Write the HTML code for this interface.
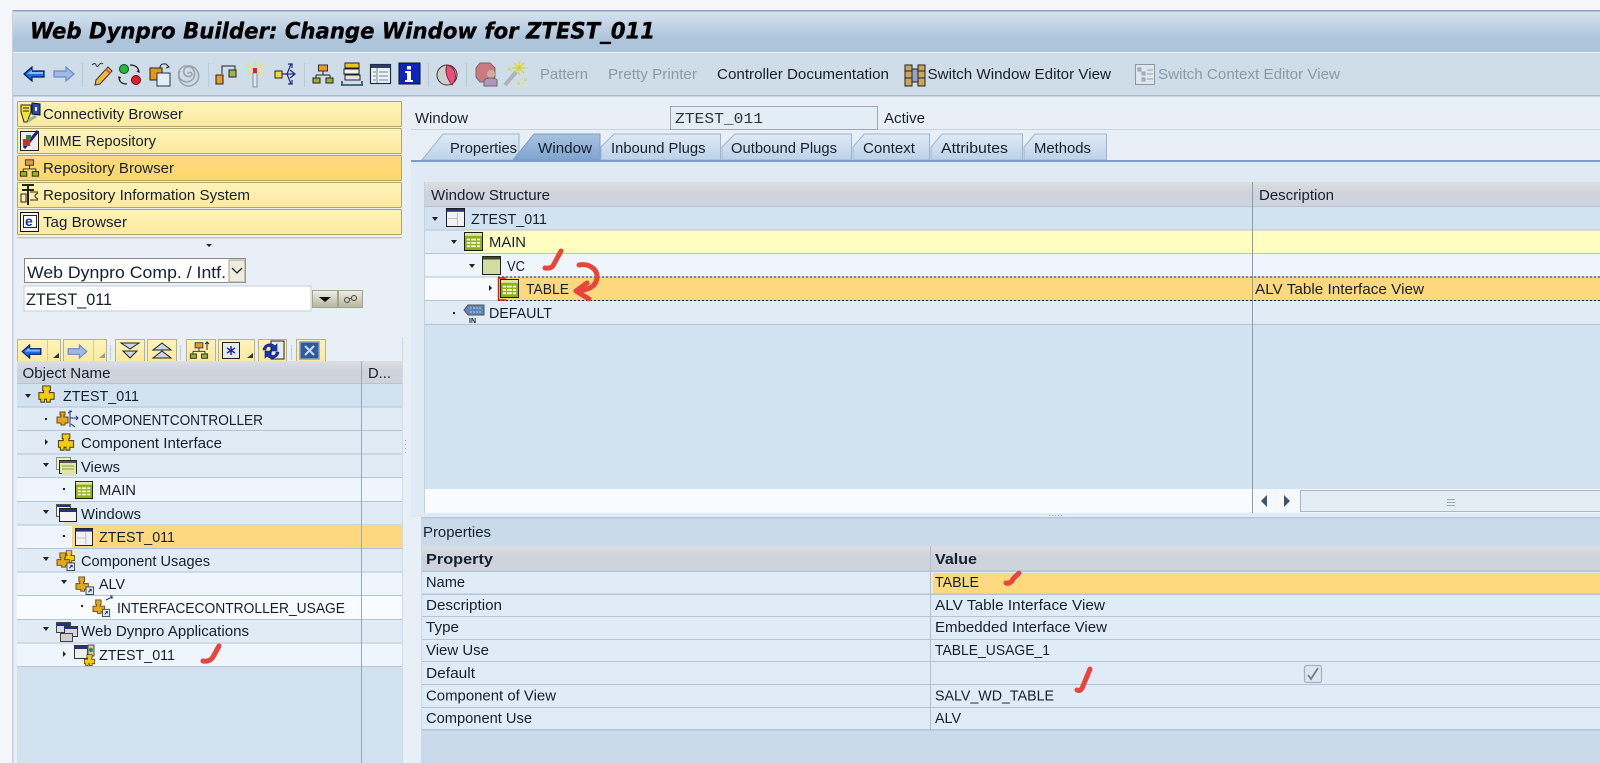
<!DOCTYPE html>
<html><head><meta charset="utf-8"><title>Web Dynpro Builder</title>
<style>
html,body{margin:0;padding:0;width:1600px;height:763px;overflow:hidden;background:#f4f6fa}
svg{display:block;filter:blur(.3px)}
text{font-family:"Liberation Sans",sans-serif;font-size:15px;fill:#16202c}
.g{fill:#8d99a4}
.t{font-family:"DejaVu Sans",sans-serif;font-size:22px;font-weight:bold;font-style:italic;fill:#000;stroke:#000;stroke-width:.35px}
.m{font-family:"Liberation Mono",monospace;font-size:15px;fill:#333}
.b{font-weight:bold}
.big{font-size:17px}
</style></head><body>
<svg xmlns="http://www.w3.org/2000/svg" width="1600" height="763" viewBox="0 0 1600 763">
<defs>
<linearGradient id="tg" x1="0" y1="0" x2="0" y2="1"><stop offset="0" stop-color="#d7e4f0"/><stop offset=".7" stop-color="#adc4da"/><stop offset="1" stop-color="#adc4da"/></linearGradient>
<linearGradient id="btn" x1="0" y1="0" x2="0" y2="1"><stop offset="0" stop-color="#fdf3b8"/><stop offset="1" stop-color="#fde9a0"/></linearGradient>
<linearGradient id="btna" x1="0" y1="0" x2="0" y2="1"><stop offset="0" stop-color="#fed983"/><stop offset="1" stop-color="#fed768"/></linearGradient>
<linearGradient id="hd" x1="0" y1="0" x2="0" y2="1"><stop offset="0" stop-color="#dcdfe2"/><stop offset=".4" stop-color="#cfd4dc"/><stop offset="1" stop-color="#ced3dc"/></linearGradient>
<linearGradient id="act" x1="0" y1="0" x2="0" y2="1"><stop offset="0" stop-color="#a8c3e0"/><stop offset="1" stop-color="#7fa3cf"/></linearGradient>
<linearGradient id="ina" x1="0" y1="0" x2="0" y2="1"><stop offset="0" stop-color="#dfeaf5"/><stop offset="1" stop-color="#bcd2e8"/></linearGradient>
<linearGradient id="dk" x1="0" y1="0" x2="0" y2="1"><stop offset="0" stop-color="#f0efe4"/><stop offset="1" stop-color="#b5b59c"/></linearGradient>
<symbol id="al" viewBox="0 0 22 16"><path d="M1 8L9 1V5H21V11H9V15Z" fill="#1f6be0" stroke="#06166a" stroke-width="1.2"/><path d="M4 8L9 4V6H20V8Z" fill="#7fc0ff"/></symbol>
<symbol id="ar" viewBox="0 0 22 16"><path d="M21 8L13 1V5H1V11H13V15Z" fill="#9db9e6" stroke="#6e8ac4" stroke-width="1.2"/></symbol>
<symbol id="hier" viewBox="0 0 22 22"><path d="M11 8V12M4 12H18M4 12V15M18 12V15" stroke="#222" fill="none"/><rect x="6.5" y="2" width="9" height="6" fill="#e69a28" stroke="#333"/><rect x="1" y="15" width="7" height="5" fill="#9aae3c" stroke="#222"/><rect x="14" y="15" width="7" height="5" fill="#9aae3c" stroke="#222"/></symbol>
<symbol id="win" viewBox="0 0 20 20"><rect x=".5" y=".5" width="19" height="19" fill="#f2f2f2" stroke="#111"/><rect x="1" y="1" width="18" height="3" fill="#26327e"/><path d="M2 11H12M12 5V18" stroke="#bbb"/></symbol>
<symbol id="view" viewBox="0 0 20 20"><rect x=".5" y=".5" width="19" height="19" fill="#8fb01c" stroke="#111"/><rect x="1" y="1" width="18" height="3" fill="#dfe89c"/><path d="M3 8H17M3 11.5H17M3 15H17" stroke="#f2f6c8" stroke-width="2"/><path d="M7 6V17M13 6V17" stroke="#8fb01c"/></symbol>
<symbol id="pz" viewBox="0 0 20 20"><path d="M2 8H7V6H6V1H14V6H13V8H18V15H14V18H10V15H8V18H4V15H2Z" fill="#f4cb10" stroke="#3d3205"/></symbol>
<symbol id="pzo" viewBox="0 0 22 20"><path d="M1 8H5V6H4V1H10V6H9V8H14V14H10V16H6V14H1Z" fill="#e3a722" stroke="#6a4a0c"/><rect x="11.500" y="11.500" width="8" height="8" fill="#dce7ef" stroke="#2c4a62"/><path d="M14 17L17 14M15 14H17V16" stroke="#1a2c4c" fill="none"/></symbol>
</defs>

<rect width="1600" height="763" fill="#e8eff7"/>
<rect width="1600" height="10" fill="#f4f6fa"/>
<rect width="12" height="763" fill="#f4f6fa"/>
<rect x="12" y="10" width="1.5" height="753" fill="#c4d0de"/>
<rect x="13" y="10" width="1587" height="42" fill="url(#tg)"/>
<rect x="13" y="10" width="1587" height="1.5" fill="#8aa4c2"/>
<rect x="13" y="52" width="1587" height="1" fill="#eaf0f6"/>
<rect x="13" y="53" width="1587" height="43" fill="#cfdde8"/>
<rect x="13" y="95" width="1587" height="1.5" fill="#a7b9ca"/>
<text class="t" x="30" y="38.500" textLength="625" lengthAdjust="spacingAndGlyphs">Web Dynpro Builder: Change Window for ZTEST_011</text>

<!-- Toolbar icons -->
<use href="#al" x="23" y="66" width="22" height="16"/>
<use href="#ar" x="53" y="66" width="22" height="16"/>
<g fill="#b9c9d6"><rect x="82" y="63" width="1" height="24"/><rect x="208" y="63" width="1" height="24"/><rect x="304" y="63" width="1" height="24"/><rect x="428" y="63" width="1" height="24"/><rect x="466" y="63" width="1" height="24"/></g>
<!-- pencil -->
<path d="M92 65q3-3 4 0t3 0 4-1" fill="none" stroke="#333"/>
<path d="M108 67L112 71L100 84L95 85L96 80Z" fill="#f5b83a" stroke="#333"/><path d="M106 69L110 73" stroke="#e0584a" stroke-width="2"/>
<!-- traffic -->
<circle cx="124" cy="69" r="4.5" fill="#22b845" stroke="#0c4a18"/><circle cx="136" cy="80" r="4.5" fill="#e0202e" stroke="#5a0c14"/>
<path d="M130 65q8 0 9 7l-2-1M127 84q-8 0-8-7l2 1" fill="none" stroke="#222" stroke-width="1.3"/>
<!-- activate copy -->
<rect x="150" y="68" width="12" height="12" fill="#e8951c" stroke="#222"/><rect x="157" y="73" width="13" height="13" fill="#e4eef6" stroke="#24304c"/><path d="M160 68q0-5 6-4l3 3-3 1" fill="none" stroke="#222"/>
<!-- spiral -->
<path d="M188 74a2 2 0 1 1 3 2a5 5 0 1 1 2-7a8 8 0 1 1-5-3a10 10 0 1 1-8 5" fill="none" stroke="#9aa4ac" stroke-width="1.6"/>
<!-- where-used -->
<path d="M222 74V66H235V70" fill="none" stroke="#222"/><rect x="216" y="75" width="7" height="9" fill="#e69a28" stroke="#222"/><rect x="229" y="70" width="7" height="7" fill="#a6b446" stroke="#222"/>
<!-- flash -->
<rect x="253" y="73" width="4" height="14" fill="#dfe7ee" stroke="#87939e"/><rect x="253" y="68" width="4" height="5" fill="#e0202e"/><path d="M247 64L252 69M263 64L258 69M247 75L251 72M264 75L259 72M255 61V66" stroke="#f2e53a" stroke-width="1.5"/>
<!-- move -->
<rect x="275" y="71" width="7" height="7" fill="#f4dc28" stroke="#222"/><path d="M282 74H295M290 70L295 74L290 78M287 74L291 64M287 74L291 84M288 64H292V68M288 84H292V80" fill="none" stroke="#1d2c84" stroke-width="1.2"/>
<use href="#hier" x="312" y="63" width="22" height="22"/>
<!-- stack -->
<rect x="345" y="63" width="14" height="5" fill="#e8c81c" stroke="#222"/><rect x="344" y="69" width="15" height="5" fill="#f2f2f2" stroke="#222"/><rect x="345" y="75" width="15" height="5" fill="#e4e4e4" stroke="#222"/><path d="M341 85H363M342 81V85M362 81V85" stroke="#1a4a62" stroke-width="1.5"/>
<!-- list -->
<rect x="370.500" y="64.500" width="20" height="19" fill="#eef3f7" stroke="#1c3048" stroke-width="1.2"/><rect x="371" y="65" width="19" height="3" fill="#2c3c70"/><path d="M377 68V83M373 72H376M373 76H376M373 80H376M379 72H388M379 76H388M379 80H388" stroke="#708498"/>
<!-- info -->
<rect x="399" y="63" width="21" height="21" fill="#0c24c0" stroke="#111"/><rect x="407" y="66" width="4" height="3.500" fill="#fff"/><path d="M405 71H411V80H413V82H405V80H407V73H405Z" fill="#fff"/>
<!-- sphere -->
<circle cx="447" cy="75" r="10" fill="#cfcfcf" stroke="#333"/><path d="M447 65C456 67 458 78 452 85C448 80 444 72 447 65Z" fill="#e8507c" stroke="#8a2436"/>
<!-- stop user -->
<path d="M480 63H490L495 68V77L490 82H480L476 77V68Z" fill="#cc7a82" stroke="#766"/><circle cx="491" cy="74" r="4" fill="#d2aca0"/><path d="M484 86V82Q484 78 491 78T497 82V86Z" fill="#b298b8" stroke="#667"/>
<!-- wand -->
<path d="M505 85L517 71" stroke="#a9b3b8" stroke-width="4"/><circle cx="519" cy="68" r="5" fill="#eee67a"/><path d="M519 61V75M512 68H526M514 63L524 73M524 63L514 73" stroke="#c8c860"/><g fill="#d8d878"><rect x="524" y="78" width="3" height="3"/><rect x="517" y="82" width="3" height="3"/><rect x="508" y="68" width="3" height="3"/></g>

<text class="g" x="540" y="79" textLength="48" lengthAdjust="spacingAndGlyphs">Pattern</text>
<text class="g" x="608" y="79" textLength="89" lengthAdjust="spacingAndGlyphs">Pretty Printer</text>
<text x="717" y="79" textLength="172" lengthAdjust="spacingAndGlyphs">Controller Documentation</text>
<!-- film icon -->
<rect x="905" y="65" width="7" height="21" fill="#c9a85c" stroke="#222"/><rect x="918" y="65" width="7" height="21" fill="#c9a85c" stroke="#222"/><rect x="912" y="69" width="6" height="13" fill="#8ba4c8" stroke="#223"/><path d="M905 71H912M905 78H912M918 71H925M918 78H925" stroke="#222"/>
<text x="927.500" y="79" textLength="183.500" lengthAdjust="spacingAndGlyphs">Switch Window Editor View</text>
<rect x="1135.500" y="64.500" width="19" height="20" fill="#dfe6ec" stroke="#8b99a6"/><path d="M1138 68h3v3h-3zM1142 78h3v3h-3zM1142 72h3v3h-3zM1147 70h6M1147 74h6M1147 79h6" fill="#aab6c0" stroke="#9aa6b2"/>
<text class="g" x="1158" y="79" textLength="182" lengthAdjust="spacingAndGlyphs">Switch Context Editor View</text>

<!-- Left browser buttons -->
<g stroke="#b0a56c">
<rect x="17.500" y="101.500" width="384" height="25" rx="1" fill="url(#btn)"/>
<rect x="17.500" y="128.500" width="384" height="25" rx="1" fill="url(#btn)"/>
<rect x="17.500" y="155.500" width="384" height="25" rx="1" fill="url(#btna)"/>
<rect x="17.500" y="182.500" width="384" height="25" rx="1" fill="url(#btn)"/>
<rect x="17.500" y="209.500" width="384" height="25" rx="1" fill="url(#btn)"/>
</g>
<rect x="17" y="237" width="385" height="1.500" fill="#c8c8b0"/>
<!-- button icons -->
<path d="M21 105H31V112L27 122H24L21 112Z" fill="#f2e23c" stroke="#222"/><path d="M23 108H29M23 111H29" stroke="#222"/><path d="M32 103L40 104V115L32 114Z" fill="#2848c8" stroke="#111"/><rect x="35" y="107" width="2" height="4" fill="#fff"/><path d="M28 121L36 116" stroke="#9aa" stroke-width="3"/>
<rect x="20.500" y="131.500" width="18" height="19" fill="#eee" stroke="#222"/><path d="M24 148L38 131" stroke="#20208c" stroke-width="3"/><rect x="23" y="139" width="7" height="7" fill="#c8302c"/><rect x="26" y="135" width="5" height="5" fill="#2c8a34"/>
<use href="#hier" x="19" y="158" width="21" height="20"/>
<path d="M22 185H34M28 185V205M22 190H34" stroke="#222" stroke-width="2" fill="none"/><path d="M21 194H26V202H21ZM30 192H38M30 200H38" stroke="#222" fill="none"/><path d="M38 193Q32 196 38 199" stroke="#222" fill="none"/>
<rect x="20.500" y="212.500" width="18" height="19" fill="#f4f4f4" stroke="#111"/><rect x="23.500" y="215.500" width="13" height="12" fill="#fff" stroke="#223"/><text x="25" y="226" style="font-size:14px;font-weight:bold;fill:#1030a8">e</text>
<text x="43" y="119" textLength="140" lengthAdjust="spacingAndGlyphs">Connectivity Browser</text>
<text x="43" y="146" textLength="113" lengthAdjust="spacingAndGlyphs">MIME Repository</text>
<text x="43" y="173" textLength="131" lengthAdjust="spacingAndGlyphs">Repository Browser</text>
<text x="43" y="200" textLength="207" lengthAdjust="spacingAndGlyphs">Repository Information System</text>
<text x="43" y="227" textLength="84" lengthAdjust="spacingAndGlyphs">Tag Browser</text>
<path d="M206 244H212L209 247Z" fill="#222"/>

<!-- Dropdown + input -->
<rect x="24.500" y="258.500" width="221" height="24" fill="#fff" stroke="#8a8a80"/>
<rect x="229" y="260" width="16" height="22" fill="#ececdf" stroke="#a0a090"/><path d="M232 268L237 273L242 268" fill="none" stroke="#222" stroke-width="1.300"/>
<text class="big" x="27" y="278" textLength="199" lengthAdjust="spacingAndGlyphs">Web Dynpro Comp. / Intf.</text>
<rect x="24" y="286" width="287" height="25" fill="#fff" stroke="#c4ccd4"/>
<text class="big" x="26" y="305" textLength="86" lengthAdjust="spacingAndGlyphs">ZTEST_011</text>
<rect x="312.500" y="290.500" width="25" height="17" fill="url(#dk)" stroke="#a3a38e"/><path d="M319 297H331L325 302Z" fill="#111"/>
<rect x="338.500" y="290.500" width="24" height="17" fill="url(#dk)" stroke="#a3a38e"/><circle cx="347" cy="300" r="2.500" fill="none" stroke="#444"/><circle cx="354" cy="298" r="2.500" fill="none" stroke="#444"/><path d="M349 299L352 298" stroke="#444"/>

<!-- mini toolbar -->
<g fill="url(#btn)" stroke="#bdb27e">
<rect x="17.500" y="339.500" width="43" height="22"/><rect x="63.500" y="339.500" width="43" height="22"/>
<rect x="115.500" y="339.500" width="29" height="22"/><rect x="147.500" y="339.500" width="29" height="22"/>
<rect x="186.500" y="339.500" width="29" height="22"/><rect x="218.500" y="339.500" width="36" height="22"/>
<rect x="258.500" y="339.500" width="28" height="22"/><rect x="296.500" y="339.500" width="29" height="22"/>
</g>
<g fill="#c2ccd6"><rect x="110" y="345" width="1" height="15"/><rect x="180" y="345" width="1" height="15"/><rect x="291" y="345" width="1" height="15"/></g>
<rect x="47" y="340" width="1" height="21" fill="#d8cc90"/><rect x="93" y="340" width="1" height="21" fill="#d8cc90"/>
<use href="#al" x="21" y="344" width="21" height="15"/><use href="#ar" x="67" y="344" width="21" height="15"/>
<path d="M53 358H59V353Z" fill="#333"/><path d="M99 358H105V353Z" fill="#999"/>
<path d="M121 343H139L130 349ZM123 351H137L130 358Z" fill="#c7d5e6" stroke="#222"/>
<path d="M153 350L162 343L171 350ZM153 358L162 351L171 358Z" fill="#c7d5e6" stroke="#222"/>
<use href="#hier" x="189" y="341" width="20" height="19"/><path d="M207 350V342M205 344L207 342L209 344" stroke="#222" fill="none"/>
<rect x="222.500" y="342.500" width="17" height="16" fill="#e4e9f0" stroke="#222"/><path d="M231 346V355M227 348L235 353M235 348L227 353" stroke="#20308c" stroke-width="1.500"/>
<path d="M247 358H253V353Z" fill="#333"/>
<rect x="271" y="341" width="13" height="18" fill="#e8ecf0" stroke="#222"/><path d="M263 350a7 7 0 0 1 12-4l2-2v7h-7l2-2a3 3 0 0 0-6 1ZM279 352a7 7 0 0 1-12 4l-2 2v-7h7l-2 2a3 3 0 0 0 6-1Z" fill="#1838b8" stroke="#0a1660" stroke-width=".6"/>
<rect x="300" y="342" width="19" height="17" fill="#2c5c9c" stroke="#889cc4" stroke-width="1.500"/><path d="M305 346L314 355M314 346L305 355" stroke="#cdd8ec" stroke-width="2"/>

<!-- left table -->
<rect x="17" y="361" width="385" height="402" fill="#d3e2f0"/>
<rect x="17" y="361" width="385" height="22" fill="url(#hd)"/>
<g fill="#e1ebf6"><rect x="17" y="407" width="385" height="70"/></g>
<g fill="#eff5fc"><rect x="17" y="478" width="385" height="23"/><rect x="17" y="525" width="385" height="23"/></g>
<rect x="17" y="501" width="385" height="24" fill="#e1ebf6"/>
<rect x="17" y="548" width="385" height="24" fill="#e1ebf6"/>
<rect x="17" y="572" width="385" height="23.500" fill="#eff5fc"/>
<rect x="17" y="595" width="385" height="24" fill="#f8fbff"/>
<rect x="17" y="619" width="385" height="23" fill="#e1ebf6"/>
<rect x="17" y="642" width="385" height="24" fill="#eff5fc"/>
<rect x="72" y="526" width="330" height="22" fill="#fdd87f"/>
<g fill="#b4c4d4">
<rect x="17" y="383" width="385" height="1"/><rect x="17" y="406.500" width="385" height="1"/><rect x="17" y="430" width="385" height="1"/><rect x="17" y="453.500" width="385" height="1"/><rect x="17" y="477" width="385" height="1"/><rect x="17" y="501" width="385" height="1"/><rect x="17" y="524.500" width="385" height="1"/><rect x="17" y="548" width="385" height="1"/><rect x="17" y="571.500" width="385" height="1"/><rect x="17" y="595" width="385" height="1"/><rect x="17" y="619" width="385" height="1"/><rect x="17" y="642.500" width="385" height="1"/><rect x="17" y="666" width="385" height="1"/>
</g>
<rect x="361" y="361" width="1" height="402" fill="#98a8b8"/>
<rect x="402" y="337" width="1" height="426" fill="#d0dae6"/>
<text x="22.500" y="378" textLength="88" lengthAdjust="spacingAndGlyphs">Object Name</text>
<text x="368" y="378" textLength="23" lengthAdjust="spacingAndGlyphs">D...</text>

<!-- left tree glyphs -->
<g fill="#222">
<path d="M25 394H31L28 398Z"/>
<rect x="45" y="418" width="2" height="2"/>
<path d="M45 439V445L48 442Z"/>
<path d="M43 463H49L46 467Z"/>
<rect x="63" y="488" width="2" height="2"/>
<path d="M43 510H49L46 514Z"/>
<rect x="63" y="535" width="2" height="2"/>
<path d="M43 557H49L46 561Z"/>
<path d="M61 580H67L64 584Z"/>
<rect x="81" y="605" width="2" height="2"/>
<path d="M43 627H49L46 631Z"/>
<path d="M63 651V657L66 654Z"/>
</g>
<!-- left tree icons -->
<use href="#pz" x="37" y="385" width="19" height="19"/>
<g transform="translate(56,410)"><path d="M1 7H5V5H4V2H9V5H8V7H12V13H9V15H5V13H1Z" fill="#e3a722" stroke="#6a4a0c"/><path d="M14 0V17M12 3L16 1M14 8H22M20 6L22 8L20 10M15 14L19 17" stroke="#20308c" fill="none"/></g>
<use href="#pz" x="56" y="433" width="20" height="19"/>
<!-- views -->
<rect x="56.500" y="457.500" width="14" height="12" fill="#eef2c8" stroke="#88967c"/><rect x="59.500" y="460.500" width="17" height="13" fill="#dde8a0" stroke="#2a2a1c"/><rect x="60" y="461" width="16" height="2" fill="#556"/><path d="M62 466H74M62 469H74" stroke="#889c50"/><rect x="62" y="473" width="14" height="3" fill="#d8e0c0"/>
<use href="#view" x="75" y="481" width="18" height="18"/>
<!-- windows -->
<rect x="56.500" y="504.500" width="14" height="12" fill="#f4f4f4" stroke="#555"/><rect x="57" y="505" width="13" height="2" fill="#28327c"/><rect x="59.500" y="508.500" width="17" height="13" fill="#f4f4f4" stroke="#222"/><rect x="60" y="509" width="16" height="3" fill="#28327c"/><rect x="64" y="522" width="12" height="3" fill="#e0dcc8"/>
<use href="#win" x="75" y="528" width="18" height="18"/>
<!-- usages -->
<use href="#pz" x="62" y="550" width="14" height="14"/>
<use href="#pzo" x="56" y="552" width="21" height="19"/>
<use href="#pzo" x="75" y="576" width="21" height="19"/>
<use href="#pzo" x="92" y="599" width="20" height="18"/>
<path d="M106 600L112 597M110 596H112V599" stroke="#20308c" fill="none"/>
<!-- apps -->
<rect x="56.500" y="622.500" width="14" height="10" fill="#d8dde4" stroke="#444"/><rect x="57" y="623" width="13" height="3" fill="#28327c"/><rect x="64.500" y="626.500" width="13" height="10" fill="#d4d8de" stroke="#333"/><rect x="65" y="627" width="12" height="2" fill="#28327c"/><rect x="60.500" y="633.500" width="12" height="8" fill="#d0d0d0" stroke="#444"/>
<rect x="74.500" y="645.500" width="13" height="13" fill="#eee" stroke="#333"/><rect x="75" y="646" width="12" height="3" fill="#28327c"/><path d="M88 645H94V656H88Z" fill="#d4cc90" stroke="#555"/><circle cx="91" cy="650" r="2" fill="#2c8a44"/><use href="#pz" x="83" y="654" width="13" height="13"/>
<!-- left tree text -->
<text x="63" y="401" textLength="76" lengthAdjust="spacingAndGlyphs">ZTEST_011</text>
<text x="81" y="425" textLength="182" lengthAdjust="spacingAndGlyphs">COMPONENTCONTROLLER</text>
<text x="81" y="448" textLength="141" lengthAdjust="spacingAndGlyphs">Component Interface</text>
<text x="81" y="472" textLength="39" lengthAdjust="spacingAndGlyphs">Views</text>
<text x="99" y="495" textLength="37" lengthAdjust="spacingAndGlyphs">MAIN</text>
<text x="81" y="519" textLength="60" lengthAdjust="spacingAndGlyphs">Windows</text>
<text x="99" y="542" textLength="76" lengthAdjust="spacingAndGlyphs">ZTEST_011</text>
<text x="81" y="566" textLength="129" lengthAdjust="spacingAndGlyphs">Component Usages</text>
<text x="99" y="589" textLength="26" lengthAdjust="spacingAndGlyphs">ALV</text>
<text x="117" y="613" textLength="228" lengthAdjust="spacingAndGlyphs">INTERFACECONTROLLER_USAGE</text>
<text x="81" y="636" textLength="168" lengthAdjust="spacingAndGlyphs">Web Dynpro Applications</text>
<text x="99" y="660" textLength="76" lengthAdjust="spacingAndGlyphs">ZTEST_011</text>
<g fill="#a8b4c0"><rect x="405" y="440" width="1" height="1"/><rect x="405" y="444" width="1" height="1"/><rect x="405" y="448" width="1" height="1"/><rect x="405" y="452" width="1" height="1"/></g>

<!-- Right: window header -->
<text x="415" y="123" textLength="53" lengthAdjust="spacingAndGlyphs">Window</text>
<rect x="411" y="129" width="1189" height="1" fill="#c8d4e0"/>
<rect x="670.500" y="106.500" width="207" height="23" fill="#e2edf5" stroke="#a0a8b0"/>
<text class="m" x="675" y="123" textLength="88" lengthAdjust="spacingAndGlyphs">ZTEST_011</text>
<text x="884" y="123" textLength="41" lengthAdjust="spacingAndGlyphs">Active</text>

<!-- panel and tabs -->
<rect x="411" y="160" width="1189" height="357" fill="#dfeaf5"/>
<g stroke="#9db4cc">
<path d="M422 160L443 134H519V160Z" fill="url(#ina)"/>
<path d="M601 160V147L614 134H720.500V160Z" fill="url(#ina)"/>
<path d="M722 160V147L735 134H851.500V160Z" fill="url(#ina)"/>
<path d="M853 160V147L864 134H929.500V160Z" fill="url(#ina)"/>
<path d="M931 160V147L942 134H1022.500V160Z" fill="url(#ina)"/>
<path d="M1024 160V147L1035 134H1106.500V160Z" fill="url(#ina)"/>
</g>
<path d="M513 160L534 134H600V160Z" fill="url(#act)" stroke="#7f9dc2"/>
<rect x="411" y="160" width="1189" height="2" fill="#7c9cc6"/>
<text x="450" y="153" textLength="67" lengthAdjust="spacingAndGlyphs">Properties</text>
<text x="538" y="153" textLength="54" lengthAdjust="spacingAndGlyphs">Window</text>
<text x="611" y="153" textLength="94.500" lengthAdjust="spacingAndGlyphs">Inbound Plugs</text>
<text x="731" y="153" textLength="106" lengthAdjust="spacingAndGlyphs">Outbound Plugs</text>
<text x="863" y="153" textLength="52" lengthAdjust="spacingAndGlyphs">Context</text>
<text x="941" y="153" textLength="67" lengthAdjust="spacingAndGlyphs">Attributes</text>
<text x="1034" y="153" textLength="57" lengthAdjust="spacingAndGlyphs">Methods</text>

<!-- right tree -->
<rect x="424" y="182" width="1176" height="331" fill="#d3e2f0"/>
<rect x="424" y="182" width="1176" height="24" fill="url(#hd)"/>
<rect x="424" y="230" width="1176" height="23" fill="#e1ebf6"/>
<rect x="464" y="230" width="1136" height="23" fill="#fffdc0"/>
<rect x="424" y="253" width="1176" height="24" fill="#eff5fc"/>
<rect x="424" y="277" width="1176" height="23.500" fill="#f9fbff"/>
<rect x="498" y="277" width="1102" height="23.500" fill="#fdd87f"/>
<rect x="424" y="300.500" width="1176" height="23.500" fill="#e1ebf6"/>
<rect x="424" y="489" width="828" height="24" fill="#f8fbff"/>
<rect x="1253" y="489" width="347" height="24" fill="#f2f6fa"/>
<g fill="#b4c4d4"><rect x="424" y="206" width="1176" height="1"/><rect x="424" y="229.500" width="1176" height="1"/><rect x="424" y="253" width="1176" height="1"/><rect x="424" y="276.500" width="1176" height="1"/><rect x="424" y="300" width="1176" height="1"/><rect x="424" y="324" width="1176" height="1"/></g>
<path d="M498 277H1600M498 300.500H1600" stroke="#222" stroke-dasharray="2 2" fill="none"/>
<path d="M506 278H498.500V300H506" fill="none" stroke="#e01818" stroke-width="1.500"/>
<rect x="1252" y="182" width="1" height="331" fill="#8c9cac"/>
<rect x="424" y="182" width="1" height="331" fill="#c4d0de"/>
<!-- scrollbar -->
<rect x="1253" y="490" width="22" height="22" fill="#f6f9fc"/><rect x="1276" y="490" width="22" height="22" fill="#f6f9fc"/>
<path d="M1267 495V507L1261 501Z" fill="#3c566e"/><path d="M1284 495V507L1290 501Z" fill="#3c566e"/>
<rect x="1300.500" y="490.500" width="300" height="21" fill="#e4ecf4" stroke="#a8b8c8"/>
<g fill="#9aa8b6"><rect x="1447" y="499" width="8" height="1"/><rect x="1447" y="502" width="8" height="1"/><rect x="1447" y="505" width="8" height="1"/></g>
<text x="431" y="200" textLength="119" lengthAdjust="spacingAndGlyphs">Window Structure</text>
<text x="1259" y="200" textLength="75" lengthAdjust="spacingAndGlyphs">Description</text>
<g fill="#222"><path d="M432 217H438L435 221Z"/><path d="M451 240H457L454 244Z"/><path d="M469 264H475L472 268Z"/><path d="M489 285V291L492 288Z"/><rect x="453" y="312" width="2" height="2"/></g>
<use href="#win" x="446" y="208" width="19" height="19"/>
<use href="#view" x="464" y="232" width="19" height="19"/>
<rect x="482.500" y="256.500" width="18" height="18" fill="#d2dca4" stroke="#222"/><rect x="483" y="257" width="17" height="2.500" fill="#3e4a28"/>
<use href="#view" x="500" y="279" width="19" height="19"/>
<path d="M468 305H484V315H468L464 310Z" fill="#5e86b4" stroke="#555"/><path d="M470 308H482M470 312H482" stroke="#b8d0e8" stroke-dasharray="2 1"/><text x="469" y="323" style="font-size:7px;font-weight:bold">IN</text>
<text x="471" y="224" textLength="76" lengthAdjust="spacingAndGlyphs">ZTEST_011</text>
<text x="489" y="247" textLength="37" lengthAdjust="spacingAndGlyphs">MAIN</text>
<text x="507" y="271" textLength="18" lengthAdjust="spacingAndGlyphs">VC</text>
<text x="526" y="294" textLength="43" lengthAdjust="spacingAndGlyphs">TABLE</text>
<text x="489" y="318" textLength="63" lengthAdjust="spacingAndGlyphs">DEFAULT</text>
<text x="1255" y="294" textLength="169" lengthAdjust="spacingAndGlyphs">ALV Table Interface View</text>

<!-- sash dots -->
<g fill="#9aa8b6"><rect x="1049" y="515" width="1" height="1"/><rect x="1052" y="515" width="1" height="1"/><rect x="1055" y="515" width="1" height="1"/><rect x="1058" y="515" width="1" height="1"/><rect x="1061" y="515" width="1" height="1"/></g>

<!-- Properties panel -->
<rect x="421" y="517" width="1179" height="246" fill="#cadaea"/>
<rect x="421" y="517" width="1179" height="1.500" fill="#b8c8d8"/>
<text x="423" y="537" textLength="68" lengthAdjust="spacingAndGlyphs">Properties</text>
<rect x="422" y="546" width="1178" height="25" fill="url(#hd)"/>
<rect x="422" y="571" width="1178" height="158" fill="#dfebf6"/>
<rect x="933" y="573" width="667" height="20.500" fill="#fed97e"/>
<g fill="#b4c4d4"><rect x="422" y="570.500" width="1178" height="1.500"/><rect x="422" y="593.500" width="1178" height="1.500"/><rect x="422" y="616" width="1178" height="1"/><rect x="422" y="639" width="1178" height="1"/><rect x="422" y="661" width="1178" height="1"/><rect x="422" y="684" width="1178" height="1"/><rect x="422" y="707" width="1178" height="1"/><rect x="422" y="729" width="1178" height="1.500"/></g>
<rect x="930" y="546" width="1" height="184" fill="#b0bece"/>
<text class="b" x="426" y="564" textLength="67" lengthAdjust="spacingAndGlyphs">Property</text>
<text class="b" x="935" y="564" textLength="42" lengthAdjust="spacingAndGlyphs">Value</text>
<text x="426" y="587" textLength="39" lengthAdjust="spacingAndGlyphs">Name</text>
<text x="426" y="610" textLength="76" lengthAdjust="spacingAndGlyphs">Description</text>
<text x="426" y="632" textLength="33" lengthAdjust="spacingAndGlyphs">Type</text>
<text x="426" y="655" textLength="63" lengthAdjust="spacingAndGlyphs">View Use</text>
<text x="426" y="678" textLength="49" lengthAdjust="spacingAndGlyphs">Default</text>
<text x="426" y="700.500" textLength="130" lengthAdjust="spacingAndGlyphs">Component of View</text>
<text x="426" y="723" textLength="106" lengthAdjust="spacingAndGlyphs">Component Use</text>
<text x="935" y="587" textLength="44" lengthAdjust="spacingAndGlyphs">TABLE</text>
<text x="935" y="610" textLength="170" lengthAdjust="spacingAndGlyphs">ALV Table Interface View</text>
<text x="935" y="632" textLength="172" lengthAdjust="spacingAndGlyphs">Embedded Interface View</text>
<text x="935" y="655" textLength="115" lengthAdjust="spacingAndGlyphs">TABLE_USAGE_1</text>
<text x="935" y="700.500" textLength="119" lengthAdjust="spacingAndGlyphs">SALV_WD_TABLE</text>
<text x="935" y="723" textLength="26" lengthAdjust="spacingAndGlyphs">ALV</text>
<rect x="1304.500" y="665.500" width="17" height="17" rx="2" fill="#dde6ee" stroke="#a4b0bc" stroke-width="1.200"/><path d="M1308 675L1311 679L1318 668" fill="none" stroke="#707c88" stroke-width="1.800"/>

<!-- red annotations -->
<g fill="none" stroke="#e8453c" stroke-linecap="round" stroke-linejoin="round">
<path d="M203 661Q210 662 213 657L219 646" stroke-width="5"/>
<path d="M545 268Q552 269 554 264L561 251" stroke-width="5"/>
<path d="M579 265C590 263 598 270 597 278C596 287 588 290 576 291" stroke-width="5"/>
<path d="M587 283L576 291L589 299" stroke-width="5"/>
<path d="M1006 583Q1011 584 1013 579L1019 573" stroke-width="5"/>
<path d="M1077 690Q1081 692 1083 686L1090 669" stroke-width="5"/>
</g>
</svg>
</body></html>
